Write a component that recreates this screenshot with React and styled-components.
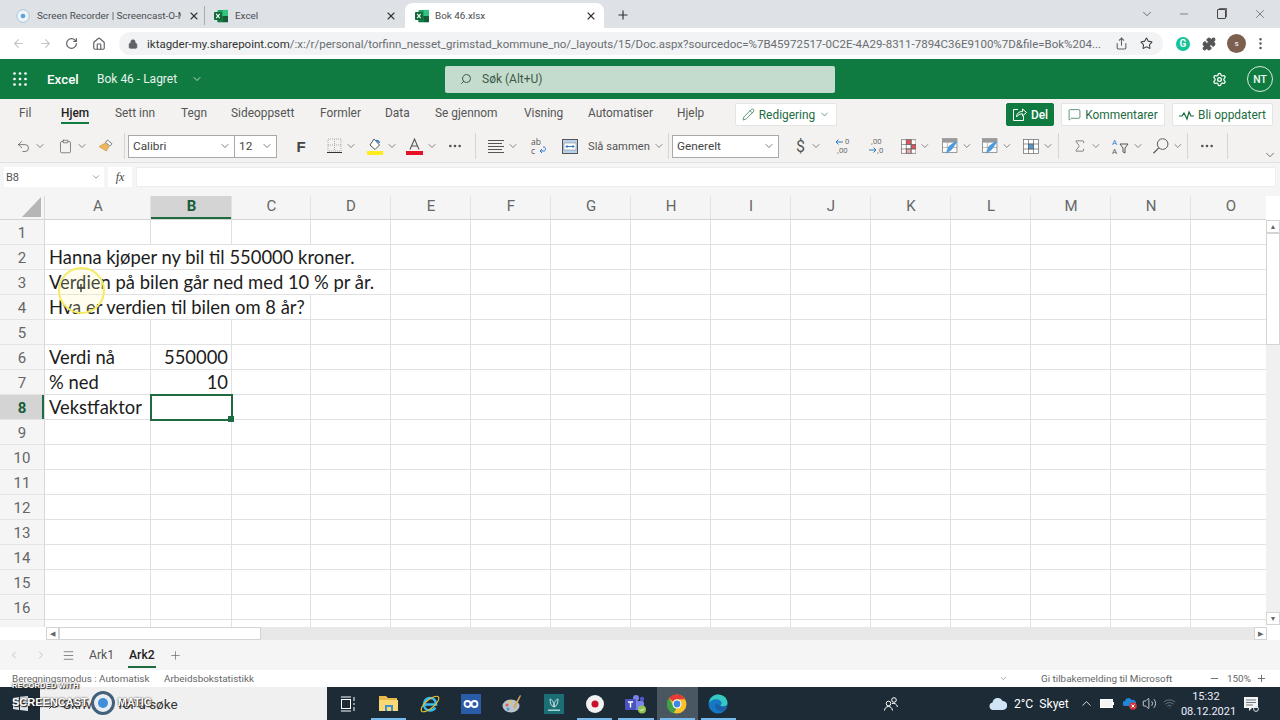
import React from 'react';
import styled, { createGlobalStyle } from 'styled-components';
import { ChevronDown, X, Plus, ArrowLeft, ArrowRight, RotateCw, Home, Lock, Share, Star, Puzzle, MoreVertical, Minus, Search, Settings, Pencil, MessageSquare, Undo2, Clipboard, MoreHorizontal, Sigma, ChevronLeft, ChevronRight, Menu, ChevronUp, Volume2, Wifi } from 'lucide-react';

const Global = createGlobalStyle`
  html, body { margin: 0; padding: 0; width: 1280px; height: 720px; overflow: hidden; background: #fff; }
  * { box-sizing: border-box; }
`;
const UI = `Roboto, "Open Sans", "Liberation Sans", sans-serif`;

const Page = styled.div`
  position: relative; width: 1280px; height: 720px; overflow: hidden;
  display: flex; flex-direction: column; font-family: ${UI}; color: #444;
`;

/* Browser tabs */
const TabStrip = styled.div`
  height: 28px; background: #dee1e6; display: flex; align-items: flex-end; padding-left: 8px; flex: none;
`;
const BrowserTab = styled.div`
  width: ${p => p.$w}px; height: 25px; display: flex; align-items: center; padding-left: ${p => p.$pl}px;
  background: ${p => (p.$active ? '#fff' : 'transparent')};
  border-radius: 8px 8px 0 0; font-size: 9.9px; color: #4a4d51; position: relative; flex: none;
`;
const TabLabel = styled.span`
  margin-left: ${p => p.$ml}px; width: ${p => p.$w}px; white-space: nowrap; overflow: hidden;
`;
const TabClose = styled.span`
  display: flex; margin-left: ${p => p.$ml}px; color: #333;
`;
const TabDivider = styled.span`
  width: 1px; height: 19px; background: #a8abaf; margin: 0 0 3px -1px; flex: none; align-self: flex-end;
`;
const NewTab = styled.span`
  display: flex; margin: 0 0 6px 12px; color: #333;
`;
const WinControls = styled.div`
  margin-left: auto; display: flex; align-self: flex-start; height: 28px; align-items: center; color: #555; padding-right: 13px; gap: 24px;
`;
const MaxBox = styled.span`
  width: 9px; height: 10px; border: 1px solid #444; border-radius: 1px; box-shadow: 1.5px -1.5px 0 -0.5px #666; margin: 0 3px;
`;

/* Address bar */
const AddressBar = styled.div`
  height: 31px; background: #fff; display: flex; align-items: center; flex: none; padding-left: 12px; color: #5f6368;
`;
const NavIcon = styled.span`
  display: flex; margin-left: ${p => p.$ml || 0}px; color: ${p => p.$c || '#5f6368'};
`;
const Omnibox = styled.div`
  margin-left: 13px; width: 1044px; height: 23px; border-radius: 12px; background: #f1f3f4;
  display: flex; align-items: center; padding-left: 9px; font-size: 11.5px; color: #5b5e62; flex: none;
`;
const Url = styled.span`
  width: 958px; margin-left: 9px; white-space: nowrap; overflow: hidden; color: #6a6d71;
  b { font-weight: 400; color: #333; }
`;
const ExtBadge = styled.span`
  width: 14px; height: 14px; border-radius: 50%; background: #15c39a; color: #fff; font-size: 10px; display: flex; align-items: center; justify-content: center; margin-left: 13px; font-weight: 600;
`;
const Avatar = styled.span`
  width: 19px; height: 19px; border-radius: 50%; background: #7d5f50; color: #fff; font-size: 8px; display: flex; align-items: center; justify-content: center; margin-left: 11px;
`;

/* Excel header */
const AppBar = styled.div`
  height: 40px; background: #0f7b41; display: flex; align-items: center; padding-left: 13px; color: #fff; flex: none;
`;
const AppName = styled.span`
  font-size: 13.4px; font-weight: 500; margin-left: 20px; width: 50px;
`;
const DocName = styled.span`
  font-size: 12px; color: #e8f2ec; width: 94px; white-space: nowrap;
`;
const SearchBox = styled.div`
  margin-left: 242px; width: 390px; height: 27px; background: #c4dccd; border-radius: 2px; display: flex; align-items: center; padding-left: 15px; font-size: 12px; color: #3f5a4a; flex: none;
`;
const SearchText = styled.span` margin-left: 10px; `;
const UserCircle = styled.span`
  width: 26px; height: 26px; border-radius: 50%; border: 1px solid #d8eadf; margin-left: 20px; font-size: 10.4px; font-weight: 500; display: flex; align-items: center; justify-content: center; color: #f4fbf6;
`;

/* Ribbon */
const RibbonTabs = styled.div`
  height: 31px; background: #f3f2f1; display: flex; align-items: center; padding: 0 0 3px 0; flex: none; font-size: 11.9px; color: #555;
`;
const TabGroup = styled.div`
  width: 735px; flex: none; display: flex; align-items: center; padding-left: 19px;
`;
const RibbonTab = styled.span`
  position: relative; width: ${p => p.$w}px; flex: none; white-space: nowrap;
  color: ${p => (p.$on ? '#222' : '#555')}; font-weight: ${p => (p.$on ? 500 : 400)};
  ${p => p.$on && `&::after { content: ''; position: absolute; left: 0; width: 28px; bottom: -4px; height: 2px; background: #107c41; }`}
`;
const RibbonButton = styled.span`
  height: 23px; display: flex; align-items: center; gap: 4px; font-size: 11.9px; flex: none; white-space: nowrap; margin-top: 3px;
  width: ${p => p.$w}px; margin-left: ${p => p.$ml || 0}px; justify-content: center; border-radius: 2px;
  background: ${p => (p.$solid ? '#0f7b41' : '#fff')}; color: ${p => (p.$solid ? '#fff' : '#1c6b42')};
  font-weight: ${p => (p.$solid ? 500 : 400)};
  border: 1px solid ${p => (p.$solid ? '#0f7b41' : '#e4e4e4')};
`;
const Toolbar = styled.div`
  height: 33px; background: #f3f2f1; display: flex; align-items: center; flex: none; position: relative;
  border-bottom: 1px solid #e3e2e0; color: #555;
`;
const Tool = styled.span`
  width: ${p => p.$w}px; margin-left: ${p => p.$ml}px; height: 24px; display: flex; align-items: center; gap: ${p => p.$gap || 3}px; flex: none; justify-content: ${p => p.$j || 'flex-start'};
  font-size: 11.2px; color: #555; white-space: nowrap;
`;
const MergeLabel = styled.span` margin-right: -7px; `;
const Sep = styled.span`
  width: 1px; height: 26px; background: #d6d5d3; margin-left: ${p => p.$ml}px; flex: none;
`;
const SelectBox = styled.span`
  width: ${p => p.$w}px; margin-left: ${p => p.$ml || 0}px; height: 23px; background: #fff; border: 1px solid #a9a9a9; display: flex; align-items: center; justify-content: space-between; padding: 0 3px 0 4px; font-size: 11.8px; color: #444; flex: none;
`;
const BoldF = styled.span`
  font-family: "Liberation Sans", sans-serif; font-size: 15px; font-weight: 700; color: #444;
`;
const Dollar = styled.span` font-size: 16px; `;
const CollapseChev = styled.span`
  position: absolute; right: 3px; bottom: 0; display: flex; color: #555;
`;

/* Formula bar */
const FormulaBar = styled.div`
  height: 33px; background: #f5f5f5; display: flex; align-items: flex-start; padding: 4px 0 0 4px; flex: none;
`;
const NameBox = styled.div`
  width: 100px; height: 20px; background: #fff; display: flex; align-items: center; justify-content: space-between; padding: 0 3px 0 2px; font-size: 11px; color: #555;
`;
const FxBox = styled.div`
  width: 24px; height: 20px; background: #fff; margin-left: 4px; font-family: "Liberation Serif", serif; font-style: italic; font-size: 12px; color: #444; display: flex; align-items: center; justify-content: center;
`;
const FormulaInput = styled.div`
  width: 1140px; height: 20px; background: #fff; margin-left: 4px; border: 1px solid #eee;
`;

/* Sheet */
const Body = styled.div`
  height: 431px; display: flex; background: #fff; flex: none; overflow: hidden;
`;
const Grid = styled.div`
  width: 1266px; flex: none; overflow: hidden;
`;
const COLS = '45px 106px 81px 79px repeat(12, 80px)';
const HeadRow = styled.div`
  display: grid; grid-template-columns: ${COLS}; height: 24px; width: 1271px; background: #f5f5f5; border-bottom: 1px solid #d4d4d4;
`;
const Corner = styled.div`
  display: flex; align-items: flex-end; justify-content: flex-end; padding: 0 3px 2px 0; border-right: 1px solid #d8d8d8;
`;
const ColHead = styled.div`
  display: flex; align-items: center; justify-content: center; font-size: 15px; padding: 0 0 3px 1px;
  border-right: 1px solid #e2e2e2; color: ${p => (p.$on ? '#185c37' : '#666')}; font-weight: ${p => (p.$on ? 700 : 400)};
  background: ${p => (p.$on ? '#d4d4d4' : 'transparent')};
  ${p => p.$on && `box-shadow: inset 0 -2px 0 #1e6b42;`}
`;
const Row = styled.div`
  display: grid; grid-template-columns: ${COLS}; height: 25px; width: 1271px;
`;
const RowHead = styled.div`
  display: flex; align-items: center; justify-content: center; font-size: 15px; padding-top: 1px;
  background: ${p => (p.$on ? '#d4d4d4' : '#f5f5f5')}; color: ${p => (p.$on ? '#185c37' : '#666')}; font-weight: ${p => (p.$on ? 700 : 400)};
  border-right: 1px solid #d8d8d8; border-bottom: 1px solid #e4e4e4;
  ${p => p.$on && `box-shadow: inset -2px 0 0 #1e6b42;`}
`;
const Cell = styled.div`
  grid-column: span ${p => p.$span || 1};
  border-right: 1px solid #e1e1e1; border-bottom: 1px solid #e1e1e1;
  display: flex; align-items: center; white-space: nowrap;
  justify-content: ${p => (p.$right ? 'flex-end' : 'flex-start')};
  padding: 0 3px 1px 4px; font-family: "Lato", "Carlito", sans-serif; font-size: 18.4px; color: #1c1c1c;
  position: relative;
  ${p => p.$sel && `
    outline: 2px solid #1e6b42; outline-offset: -1px; z-index: 2;
    &::after { content: ''; position: absolute; right: -3px; bottom: -3px; width: 6px; height: 6px; background: #1e6b42; border: 0; }
  `}
`;
const VScroll = styled.div`
  width: 14px; flex: none; background: #f0f0f0; margin-top: 24px; height: 405px; display: flex; flex-direction: column; position: relative;
`;
const ScrollBtn = styled.div`
  height: 13px; background: #fff; border: 1px solid #d4d4d4; display: flex; align-items: center; justify-content: center; font-size: 7px; color: #666; flex: none;
`;
const VThumb = styled.div`
  height: 112px; background: #fff; border: 1px solid #d4d4d4; flex: none;
`;
const VTrack = styled.div` flex: 1; `;

const HScrollRow = styled.div`
  height: 13px; display: flex; padding-left: 46px; background: #fff; flex: none;
`;
const HBtn = styled.div`
  width: 13px; background: #fff; border: 1px solid #d4d4d4; display: flex; align-items: center; justify-content: center; font-size: 7px; color: #666; flex: none; overflow: hidden;
`;
const HThumb = styled.div`
  width: 202px; background: #fff; border: 1px solid #d4d4d4; flex: none;
`;
const HTrack = styled.div`
  width: 993px; background: #e8e8e8; flex: none;
`;

/* Sheet tabs */
const SheetTabs = styled.div`
  height: 30px; background: #f5f5f5; display: flex; align-items: center; padding-left: 8px; color: #666; flex: none; font-size: 12.2px;
`;
const SheetNav = styled.span`
  display: flex; margin-left: ${p => p.$ml || 0}px; color: ${p => p.$c || '#666'};
`;
const SheetTab = styled.span`
  position: relative; margin-left: ${p => p.$ml}px; width: ${p => p.$w}px; flex: none; color: ${p => (p.$on ? '#222' : '#555')};
  font-weight: ${p => (p.$on ? 500 : 400)};
  ${p => p.$on && `&::after { content: ''; position: absolute; left: -1px; right: -1px; bottom: -6px; height: 2px; background: #1e6b42; }`}
`;

/* Status bar */
const StatusBar = styled.div`
  height: 17px; background: #fff; display: flex; align-items: center; padding-left: 12px; font-size: 9.9px; color: #666; flex: none; white-space: nowrap;
`;
const StatusItem = styled.span`
  margin-left: ${p => p.$ml || 0}px; width: ${p => p.$w}px; display: flex; flex: none;
`;

/* Taskbar */
const Taskbar = styled.div`
  height: 33px; background: #1c2b36; display: flex; align-items: stretch; flex: none; color: #fff;
`;
const StartBtn = styled.div`
  width: 40px; flex: none; display: flex; align-items: center; justify-content: center;
`;
const TaskSearch = styled.div`
  width: 287px; background: #f0f0f0; display: flex; align-items: center; padding-left: 8px; font-size: 13.5px; color: #333; flex: none; gap: 3px;
`;
const TaskSlot = styled.div`
  width: 41.2px; flex: none; display: flex; align-items: center; justify-content: center; position: relative;
  background: ${p => (p.$active ? '#4a5761' : 'transparent')};
  ${p => p.$open && `&::after { content: ''; position: absolute; left: 3px; right: 3px; bottom: 0; height: 2px; background: #76b9ed; }`}
`;
const Tray = styled.div`
  flex: 1; display: flex; align-items: center; color: #fff;
`;
const TrayItem = styled.span`
  margin-left: ${p => p.$ml}px; display: flex; align-items: center; flex: none; white-space: nowrap; font-size: ${p => p.$fs || 12}px;
  ${p => p.$w && `width: ${p.$w}px;`}
`;
const Clock = styled.div`
  margin-left: ${p => p.$ml}px; width: 50px; text-align: center; font-size: 11px; line-height: 15px; flex: none; color: #eef;
`;

/* Overlays */
const ClickRing = styled.div`
  position: absolute; left: 58px; top: 267px; width: 47px; height: 47px; border-radius: 50%;
  border: 2px solid #f5ea62; background: rgba(255, 250, 170, 0.2); z-index: 5;
`;
const Pointer = styled.span`
  position: absolute; left: 75px; top: 282px; z-index: 6; display: flex; color: #444;
`;
const Watermark = styled.div`
  position: absolute; left: 12px; top: 682px; z-index: 7; color: #fff; font-family: "Liberation Sans", sans-serif; font-weight: 700;
  text-shadow: 0 0 2px #222, 1px 1px 1px #222; line-height: 1;
`;
const WmTop = styled.div` font-size: 7.5px; letter-spacing: 0.2px; `;
const WmRow = styled.div`
  display: flex; align-items: center; font-size: 11px; margin-top: 1px;
`;
const WmDot = styled.span`
  width: 24px; height: 24px; border-radius: 50%; border: 3px solid #43607a; background: #e9eef2; display: flex; align-items: center; justify-content: center; margin: 0 3px 0 3px;
  &::after { content: ''; width: 10px; height: 10px; border-radius: 50%; background: #3f8fd8; }
`;

const Chev = ({ s = 12 }) => <ChevronDown size={s} strokeWidth={1.4} />;

const ExcelIcon = ({ s = 14 }) => (
  <svg width={s} height={s} viewBox="0 0 16 16"><rect x="4" y="1" width="12" height="14" rx="1" fill="#21a366" /><rect x="10" y="1" width="6" height="7" fill="#33c481" /><rect x="4" y="8" width="6" height="7" fill="#107c41" /><rect x="10" y="8" width="6" height="7" fill="#185c37" /><rect x="0" y="3.5" width="9" height="9" rx="1" fill="#0e6b38" /><path d="M2.5 5.5l4 5M6.500 5.500l-4 5" stroke="#fff" strokeWidth="1.200" /></svg>
);
const ScreencastFav = () => (
  <svg width="14" height="14" viewBox="0 0 14 14"><circle cx="7" cy="7" r="6.3" fill="#eef3f7" stroke="#a9c6dc" /><circle cx="7" cy="7" r="2.3" fill="#5aa5de" /></svg>
);
const AppsDots = () => (
  <svg width="14" height="14" viewBox="0 0 14 14" fill="#fff">{[1.5, 7, 12.5].flatMap(x => [1.5, 7, 12.5].map(y => <circle key={x + '-' + y} cx={x} cy={y} r="1.35" />))}</svg>
);
const Painter = () => (
  <svg width="16" height="16" viewBox="0 0 16 16"><path d="M9.5 2 14 5.8 11.8 8 7.6 4.4z" fill="#fff" stroke="#777" /><path d="M7.4 5 11 8.6 8.4 13 1 8.6z" fill="#eeb75b" stroke="#c48f35" strokeWidth=".6" /></svg>
);
const Borders = () => (
  <svg width="15" height="16" viewBox="0 0 15 16" stroke="#aaa" fill="none" strokeDasharray="1 1"><rect x="1" y="1" width="13" height="12" /><path d="M7.5 1v12M1 7h13" /><path d="M0 14.5h15" stroke="#333" strokeDasharray="none" /></svg>
);
const Fill = () => (
  <svg width="16" height="17" viewBox="0 0 16 17"><path d="M7 1l5.5 6L8 11.5 3 7z" fill="#fff" stroke="#555" /><path d="M9 2.5c2 0 3 .5 3.5 2.5" stroke="#2d7bc9" fill="none" strokeWidth="1.4" /><rect x="0" y="13" width="16" height="4" fill="#ffec1e" /></svg>
);
const FontColor = () => (
  <svg width="17" height="17" viewBox="0 0 17 17"><path d="M4 11.5 8.5 1l4.500 10.500M5.700 8h5.600" stroke="#555" fill="none" strokeWidth="1.100" /><rect x="0" y="13" width="17" height="4" fill="#e81123" /></svg>
);
const AlignLines = () => (
  <svg width="16" height="16" viewBox="0 0 16 16" stroke="#555"><path d="M0 2.500h16M0 5.500h14M0 8.500h16M0 11.500h14M0 14.500h16" /></svg>
);
const Wrap = () => (
  <svg width="16" height="18" viewBox="0 0 16 18"><text x="0" y="8" fontSize="8.500" fill="#555" fontFamily="Open Sans">ab</text><text x="0" y="17" fontSize="8.500" fill="#555" fontFamily="Open Sans">c</text><path d="M9 14h4c2 0 2-4 0-4h-1M11 12l-2 2 2 2" stroke="#2d7bc9" fill="none" /></svg>
);
const Merge = () => (
  <svg width="16" height="15" viewBox="0 0 16 15"><rect x=".5" y=".5" width="15" height="14" fill="#b9d3ec" stroke="#555" /><rect x="2" y="4" width="12" height="7" fill="#fff" stroke="#777" strokeWidth=".5" /><path d="M4 7.500h8M5.500 6 4 7.500 5.500 9M10.500 6 12 7.500 10.500 9" stroke="#2d7bc9" fill="none" /></svg>
);
const DecLeft = () => (
  <svg width="16" height="18" viewBox="0 0 16 18"><path d="M8 5H1M3.500 2.500 1 5l2.500 2.500" stroke="#2d7bc9" fill="none" /><text x="10" y="7" fontSize="7.500" fill="#555" fontFamily="Open Sans">0</text><text x="2" y="16" fontSize="7.500" fill="#555" fontFamily="Open Sans">,00</text></svg>
);
const DecRight = () => (
  <svg width="16" height="18" viewBox="0 0 16 18"><text x="3" y="7" fontSize="7.500" fill="#555" fontFamily="Open Sans">,00</text><path d="M1 13h7M5.500 10.500 8 13l-2.500 2.500" stroke="#2d7bc9" fill="none" /><text x="9" y="16" fontSize="7.500" fill="#555" fontFamily="Open Sans">,0</text></svg>
);
const TableRed = () => (
  <svg width="16" height="15" viewBox="0 0 16 15" stroke="#666" strokeWidth=".7"><rect x=".5" y=".5" width="15" height="14" fill="#fff" /><rect x="5.500" y=".5" width="5" height="5" fill="#e8505b" /><rect x="10.500" y="5.500" width="5" height="4.500" fill="#e8505b" /><rect x="5.500" y="10" width="5" height="4.500" fill="#f7a6ab" /><path d="M.5 5.500h15M.5 10h15M5.500.5v14M10.500.5v14" fill="none" /></svg>
);
const TableBrush = () => (
  <svg width="17" height="17" viewBox="0 0 17 17"><rect x=".5" y=".5" width="15" height="14" fill="#fff" stroke="#666" strokeWidth=".7" /><rect x=".5" y=".5" width="15" height="4" fill="#9a9a9a" /><path d="M5.500 4.500v10M.5 9.500h15" stroke="#888" strokeWidth=".6" /><path d="M4 16l3-8 7-5 1.500 1-5.500 8z" fill="#4c9ad9" /></svg>
);
const CellsIcon = () => (
  <svg width="16" height="16" viewBox="0 0 16 16" stroke="#666" strokeWidth=".7" fill="none"><rect x=".5" y="1.500" width="15" height="14" fill="#fff" /><rect x="5.500" y="6" width="5" height="5" fill="#4c9ad9" /><path d="M.5 6h15M.5 11h15M5.500 1.500v14M10.500 1.500v14" /></svg>
);
const SortFilter = () => (
  <svg width="17" height="18" viewBox="0 0 17 18"><text x="0" y="8" fontSize="8" fill="#2d7bc9" fontFamily="Open Sans">A</text><text x="0" y="17" fontSize="8" fill="#555" fontFamily="Open Sans">A</text><path d="M8 7h8l-3 4v5l-2-1v-4z" fill="none" stroke="#555" /></svg>
);
const SearchGlass = () => (
  <svg width="18" height="18" viewBox="0 0 18 18" fill="none" stroke="#555"><circle cx="11" cy="7" r="5.500" /><path d="M7 11l-5.500 5.500" strokeWidth="1.200" /></svg>
);
const ShareBox = ({ c = '#fff' }) => (
  <svg width="15" height="15" viewBox="0 0 15 15" fill="none" stroke={c}><path d="M6 2.500H1.500v11h10V9" /><path d="M4.500 10c0-3.500 2.500-5.500 6-5.500V2l4 3.500-4 3.500V6.800c-2.500 0-4.500 1-6 3.200z" /></svg>
);
const Pulse = () => (
  <svg width="15" height="12" viewBox="0 0 15 12" fill="none" stroke="#1c6b42" strokeWidth="1.200"><path d="M0 7h3l2-3 3 6 2-7 2 4h3" /></svg>
);
const WinLogo = () => (
  <svg width="15" height="15" viewBox="0 0 15 15" fill="#dfe5ea"><path d="M0 2l6-1v6H0zM7 .8 15 0v7H7zM0 8h6v6l-6-1zM7 8h8v7l-8-1z" /></svg>
);
const TaskView = () => (
  <svg width="16" height="16" viewBox="0 0 16 16" fill="none" stroke="#fff"><rect x="1.500" y="3.500" width="9" height="9" /><path d="M1 1h10M1 15h10M14 1v4M14 7v2M14 11v4" /></svg>
);
const Explorer = () => (
  <svg width="20" height="18" viewBox="0 0 20 18"><path d="M0 1h7l2 2h9v13H0z" fill="#e9b949" /><rect x="0" y="5" width="19" height="11" fill="#f8d775" /><rect x="6" y="10" width="8" height="6" fill="#3f8fd0" /><rect x="8" y="12" width="4" height="4" fill="#f8d775" /></svg>
);
const IE = () => (
  <svg width="22" height="22" viewBox="0 0 22 22" fill="none"><path d="M5.500 11.500h11.500c0-4-2.500-6.500-6-6.500s-6 2.800-6 6.500c0 3.600 2.500 6 6 6 2.400 0 4.300-1 5.300-3" stroke="#39bdf0" strokeWidth="2.600" /><ellipse cx="11" cy="11" rx="11" ry="4.200" transform="rotate(-40 11 11)" stroke="#e8c533" strokeWidth="1.100" /></svg>
);
const Infinity2 = () => (
  <svg width="20" height="20" viewBox="0 0 20 20"><rect width="20" height="20" fill="#2a5caa" /><circle cx="6.500" cy="10" r="3" fill="none" stroke="#fff" strokeWidth="1.800" /><circle cx="13.500" cy="10" r="3" fill="none" stroke="#fff" strokeWidth="1.800" /></svg>
);
const Palette = () => (
  <svg width="20" height="20" viewBox="0 0 20 20"><ellipse cx="9" cy="12" rx="8.500" ry="6.500" fill="#b9c4cc" /><circle cx="5" cy="11" r="1.500" fill="#e25b4c" /><circle cx="8" cy="8" r="1.500" fill="#f2c33c" /><circle cx="6" cy="15" r="1.500" fill="#3c9ad9" /><path d="M11 13 18 1l1 .7-6 13z" fill="#d9a55a" /></svg>
);
const Unibok = () => (
  <svg width="20" height="20" viewBox="0 0 20 20"><rect width="20" height="20" fill="#1a6f75" /><path d="M10 13C7 12 6 9 6 5c2 .5 4 3 4 8zM10 13c3-1 4-4 4-8-2 .5-4 3-4 8z" fill="none" stroke="#d6eced" strokeWidth=".9" /><rect x="4" y="15.500" width="12" height="1.500" fill="#a7d3d6" /></svg>
);
const RecordBtn = () => (
  <svg width="18" height="18" viewBox="0 0 18 18"><circle cx="9" cy="9" r="9" fill="#f1f1f1" /><circle cx="9" cy="9" r="3.500" fill="#c8102e" /></svg>
);
const Teams = () => (
  <svg width="22" height="20" viewBox="0 0 22 20"><circle cx="11" cy="4" r="3" fill="#7b83eb" /><circle cx="17" cy="5" r="2.200" fill="#5059c9" /><rect x="8" y="7" width="11" height="9" rx="2" fill="#7b83eb" /><rect x="0" y="5" width="11" height="11" rx="1" fill="#4b53bc" /><path d="M3 8h5M5.500 8v5.500" stroke="#fff" strokeWidth="1.400" /><circle cx="17" cy="15.500" r="4" fill="#92c353" /><path d="M15 15.500l1.500 1.500 2.500-2.500" stroke="#fff" fill="none" /></svg>
);
const ChromeLogo = () => (
  <svg width="20" height="20" viewBox="0 0 20 20"><circle cx="10" cy="10" r="9.500" fill="#fbc02d" /><path d="M10 .5A9.500 9.500 0 0 1 18.200 5.200H10A4.800 4.800 0 0 0 5.800 7.600L2 3.900A9.500 9.500 0 0 1 10 .5z" fill="#e53935" /><path d="M2 3.900l4 6.900a4.800 4.800 0 0 0 3.300 3.900l-2.800 4.600A9.500 9.500 0 0 1 2 3.900z" fill="#43a047" /><circle cx="10" cy="10" r="4.500" fill="#fff" /><circle cx="10" cy="10" r="3.400" fill="#3f87e5" /></svg>
);
const Edge = () => (
  <svg width="20" height="20" viewBox="0 0 20 20"><circle cx="10" cy="10" r="9.500" fill="#1478c4" /><path d="M.6 9C2 3 6.500.5 10 .5c5.500 0 9.500 4 9.500 8.500 0 2.500-2 3.500-4 3.500-1.500 0-3-.5-3.500-1 1.500-.8 2-2 1.500-3.200C12.500 6 10 5 7.500 5.300 4 5.700 1.800 7.500.6 9z" fill="#35c9c0" /><path d="M12 11.500c1 1 2.500 1.300 3.500 1 2 0 4-1 4-3.500 0 2-.5 5.500-4 8-1 .3-4 .5-6-1-2.500-1.500-3-5-1-7 .5 1 1.500 2 3.500 2.500z" fill="#1a5fa8" /></svg>
);
const Cloud = () => (
  <svg width="18" height="14" viewBox="0 0 18 14"><path d="M4 13a3.800 3.800 0 0 1-.5-7.500A5.300 5.300 0 0 1 13.500 4 4.500 4.500 0 0 1 14 13z" fill="#cfe4f5" /></svg>
);
const Battery = () => (
  <svg width="14" height="9" viewBox="0 0 14 9"><rect x=".5" y=".5" width="12" height="8" fill="#f4f4f4" stroke="#fff" /><rect x="13" y="3" width="1" height="3" fill="#fff" /></svg>
);
const OneDriveErr = () => (
  <svg width="14" height="13" viewBox="0 0 14 13"><path d="M2 9a2.500 2.500 0 0 1 0-5 3.500 3.500 0 0 1 6.600-1A3 3 0 0 1 11 9z" fill="#1f88d9" /><circle cx="10" cy="9" r="3.800" fill="#d13438" /><path d="M8.500 7.500l3 3M11.500 7.500l-3 3" stroke="#fff" /></svg>
);
const Notif = () => (
  <svg width="16" height="16" viewBox="0 0 16 16"><path d="M1 1h14v11H9l-3 3v-3H1z" fill="#f4f4f4" /><path d="M3 4h10M3 6.500h10M3 9h7" stroke="#6c7780" /><circle cx="13" cy="13" r="2.400" fill="none" stroke="#dfe5ea" /></svg>
);
const People = () => (
  <svg width="14" height="14" viewBox="0 0 14 14" fill="none" stroke="#fff" strokeWidth="1"><circle cx="4.500" cy="6.500" r="2.300" /><circle cx="10" cy="3" r="2.300" /><path d="M.5 13.500c.3-2.500 1.800-4 4-4s3.700 1.500 4 4M8 6.500c2.500-.8 5 .8 5.500 3.500" /></svg>
);
const CornerTri = () => (
  <svg width="19" height="20" viewBox="0 0 19 20"><path d="M19 0v20H0z" fill="#b6b6b6" /></svg>
);

const columns = ['A', 'B', 'C', 'D', 'E', 'F', 'G', 'H', 'I', 'J', 'K', 'L', 'M', 'N', 'O'];

const Blank = ({ n }) => Array.from({ length: n }, (_, i) => <Cell key={i} />);

const rows = [
  { n: 1, parts: [] },
  { n: 2, parts: [{ t: 'Hanna kjøper ny bil til 550000 kroner.', span: 4 }] },
  { n: 3, parts: [{ t: 'Verdien på bilen går ned med 10 % pr år.', span: 4 }] },
  { n: 4, parts: [{ t: 'Hva er verdien til bilen om 8 år?', span: 3 }] },
  { n: 5, parts: [] },
  { n: 6, parts: [{ t: 'Verdi nå' }, { t: '550000', right: true }] },
  { n: 7, parts: [{ t: '% ned' }, { t: '10', right: true }] },
  { n: 8, on: true, parts: [{ t: 'Vekstfaktor' }, { t: '', sel: true }] },
  ...Array.from({ length: 9 }, (_, i) => ({ n: 9 + i, parts: [] })),
];

const ribbonTabs = [
  ['Fil', 42], ['Hjem', 54], ['Sett inn', 66], ['Tegn', 50], ['Sideoppsett', 89], ['Formler', 65],
  ['Data', 50], ['Se gjennom', 89], ['Visning', 64], ['Automatiser', 89], ['Hjelp', 30],
];

export default function App() {
  return (
    <Page>
      <Global />
      <TabStrip>
        <BrowserTab $w={197} $pl={8}>
          <ScreencastFav />
          <TabLabel $ml={7} $w={144}>Screen Recorder | Screencast-O-Matic</TabLabel>
          <TabClose $ml={7}><X size={12} strokeWidth={2.2} /></TabClose>
        </BrowserTab>
        <TabDivider />
        <BrowserTab $w={200} $pl={9}>
          <ExcelIcon />
          <TabLabel $ml={7} $w={150}>Excel</TabLabel>
          <TabClose $ml={0}><X size={12} strokeWidth={2.2} /></TabClose>
        </BrowserTab>
        <BrowserTab $active $w={199} $pl={10}>
          <ExcelIcon />
          <TabLabel $ml={6} $w={150}>Bok 46.xlsx</TabLabel>
          <TabClose $ml={0}><X size={12} strokeWidth={2.2} /></TabClose>
        </BrowserTab>
        <NewTab><Plus size={14} strokeWidth={2} /></NewTab>
        <WinControls>
          <Chev s={14} />
          <Minus size={12} strokeWidth={1.4} />
          <MaxBox />
          <X size={14} strokeWidth={1.2} />
        </WinControls>
      </TabStrip>

      <AddressBar>
        <NavIcon $c="#c2c4c7"><ArrowLeft size={13} /></NavIcon>
        <NavIcon $ml={14} $c="#c2c4c7"><ArrowRight size={13} /></NavIcon>
        <NavIcon $ml={13}><RotateCw size={13} strokeWidth={2.2} /></NavIcon>
        <NavIcon $ml={14}><Home size={14} /></NavIcon>
        <Omnibox>
          <Lock size={10} fill="#5f6368" />
          <Url><b>iktagder-my.sharepoint.com</b>/:x:/r/personal/torfinn_nesset_grimstad_kommune_no/_layouts/15/Doc.aspx?sourcedoc=%7B45972517-0C2E-4A29-8311-7894C36E9100%7D&amp;file=Bok%204...</Url>
          <NavIcon $ml={10}><Share size={13} /></NavIcon>
          <NavIcon $ml={12} $c="#444"><Star size={13} /></NavIcon>
        </Omnibox>
        <ExtBadge>G</ExtBadge>
        <NavIcon $ml={12} $c="#555"><Puzzle size={14} fill="#555" /></NavIcon>
        <Avatar>s</Avatar>
        <NavIcon $ml={7} $c="#555"><MoreVertical size={15} /></NavIcon>
      </AddressBar>

      <AppBar>
        <AppsDots />
        <AppName>Excel</AppName>
        <DocName>Bok 46 - Lagret</DocName>
        <Chev s={12} />
        <SearchBox>
          <Search size={12} style={{ transform: 'scaleX(-1)' }} />
          <SearchText>Søk (Alt+U)</SearchText>
        </SearchBox>
        <NavIcon $ml={377} $c="#fff"><Settings size={15} /></NavIcon>
        <UserCircle>NT</UserCircle>
      </AppBar>

      <RibbonTabs>
        <TabGroup>
          {ribbonTabs.map(([t, w]) => <RibbonTab key={t} $w={w} $on={t === 'Hjem'}>{t}</RibbonTab>)}
        </TabGroup>
        <RibbonButton $w={102}><Pencil size={13} strokeWidth={1.3} />Redigering<Chev s={11} /></RibbonButton>
        <RibbonButton $solid $w={48} $ml={169}><ShareBox />Del</RibbonButton>
        <RibbonButton $w={104} $ml={7}><MessageSquare size={13} strokeWidth={1.3} />Kommentarer</RibbonButton>
        <RibbonButton $w={101} $ml={7}><Pulse />Bli oppdatert</RibbonButton>
      </RibbonTabs>

      <Toolbar>
        <Tool $w={34} $ml={16}><Undo2 size={15} strokeWidth={1.2} /><Chev /></Tool>
        <Tool $w={34} $ml={8}><Clipboard size={15} strokeWidth={1.1} /><Chev /></Tool>
        <Tool $w={20} $ml={6}><Painter /></Tool>
        <Sep $ml={6} />
        <SelectBox $w={107} $ml={3}>Calibri<Chev /></SelectBox>
        <SelectBox $w={43} $ml={-1}>12<Chev /></SelectBox>
        <Tool $w={20} $ml={14} $j="center"><BoldF>F</BoldF></Tool>
        <Tool $w={34} $ml={16}><Borders /><Chev /></Tool>
        <Tool $w={36} $ml={6}><Fill /><Chev /></Tool>
        <Tool $w={36} $ml={3}><FontColor /><Chev /></Tool>
        <Tool $w={20} $ml={3} $j="center"><MoreHorizontal size={16} /></Tool>
        <Sep $ml={10} />
        <Tool $w={34} $ml={12}><AlignLines /><Chev /></Tool>
        <Tool $w={18} $ml={9}><Wrap /></Tool>
        <Tool $w={106} $ml={13} $gap={10}><Merge /><MergeLabel>Slå sammen</MergeLabel><Chev /></Tool>
        <Sep $ml={0} />
        <SelectBox $w={107} $ml={3}>Generelt<Chev /></SelectBox>
        <Tool $w={34} $ml={17} $gap={5}><Dollar>$</Dollar><Chev /></Tool>
        <Tool $w={16} $ml={5}><DecLeft /></Tool>
        <Tool $w={16} $ml={17}><DecRight /></Tool>
        <Tool $w={30} $ml={17}><TableRed /><Chev /></Tool>
        <Tool $w={31} $ml={11}><TableBrush /><Chev /></Tool>
        <Tool $w={31} $ml={9}><TableBrush /><Chev /></Tool>
        <Tool $w={31} $ml={10}><CellsIcon /><Chev /></Tool>
        <Sep $ml={4} />
        <Tool $w={30} $ml={13}><Sigma size={16} strokeWidth={1.1} /><Chev /></Tool>
        <Tool $w={32} $ml={10}><SortFilter /><Chev /></Tool>
        <Tool $w={32} $ml={8}><SearchGlass /><Chev /></Tool>
        <Sep $ml={3} />
        <Tool $w={20} $ml={9} $j="center"><MoreHorizontal size={16} /></Tool>
        <Sep $ml={10} />
        <CollapseChev><Chev s={14} /></CollapseChev>
      </Toolbar>

      <FormulaBar>
        <NameBox>B8<Chev s={10} /></NameBox>
        <FxBox>fx</FxBox>
        <FormulaInput />
      </FormulaBar>

      <Body>
        <Grid>
          <HeadRow>
            <Corner><CornerTri /></Corner>
            {columns.map(c => <ColHead key={c} $on={c === 'B'}>{c}</ColHead>)}
          </HeadRow>
          {rows.map(r => {
            const used = r.parts.reduce((a, p) => a + (p.span || 1), 0);
            return (
              <Row key={r.n}>
                <RowHead $on={r.on}>{r.n}</RowHead>
                {r.parts.map((p, i) => <Cell key={i} $span={p.span} $right={p.right} $sel={p.sel}>{p.t}</Cell>)}
                <Blank n={15 - used} />
              </Row>
            );
          })}
        </Grid>
        <VScroll>
          <ScrollBtn>▲</ScrollBtn>
          <VThumb />
          <VTrack />
          <ScrollBtn>▼</ScrollBtn>
        </VScroll>
      </Body>
      <HScrollRow>
        <HBtn>◀</HBtn>
        <HThumb />
        <HTrack />
        <HBtn>▶</HBtn>
      </HScrollRow>

      <SheetTabs>
        <SheetNav $c="#c4c4c4"><ChevronLeft size={12} /></SheetNav>
        <SheetNav $ml={15} $c="#c4c4c4"><ChevronRight size={12} /></SheetNav>
        <SheetNav $ml={15}><Menu size={13} strokeWidth={1.4} /></SheetNav>
        <SheetTab $ml={14} $w={26}>Ark1</SheetTab>
        <SheetTab $ml={14} $w={26} $on>Ark2</SheetTab>
        <SheetNav $ml={14}><Plus size={13} strokeWidth={1.3} /></SheetNav>
      </SheetTabs>

      <StatusBar>
        <StatusItem $w={152}>Beregningsmodus : Automatisk</StatusItem>
        <StatusItem $w={90}>Arbeidsbokstatistikk</StatusItem>
        <StatusItem $ml={745} $w={42}><Chev s={9} /></StatusItem>
        <StatusItem $w={168}>Gi tilbakemelding til Microsoft</StatusItem>
        <StatusItem $w={18}><Minus size={11} /></StatusItem>
        <StatusItem $w={29}>150%</StatusItem>
        <StatusItem $w={12}><Plus size={11} /></StatusItem>
      </StatusBar>

      <Taskbar>
        <StartBtn><WinLogo /></StartBtn>
        <TaskSearch><Search size={12} style={{ transform: 'scaleX(-1)' }} />Skriv her for å søke</TaskSearch>
        <TaskSlot><TaskView /></TaskSlot>
        <TaskSlot $open><Explorer /></TaskSlot>
        <TaskSlot><IE /></TaskSlot>
        <TaskSlot><Infinity2 /></TaskSlot>
        <TaskSlot><Palette /></TaskSlot>
        <TaskSlot><Unibok /></TaskSlot>
        <TaskSlot $open><RecordBtn /></TaskSlot>
        <TaskSlot $open><Teams /></TaskSlot>
        <TaskSlot $open $active><ChromeLogo /></TaskSlot>
        <TaskSlot $open><Edge /></TaskSlot>
        <Tray>
          <TrayItem $ml={145}><People /></TrayItem>
          <TrayItem $ml={91}><Cloud /></TrayItem>
          <TrayItem $ml={7} $fs={12.2} $w={56}>2°C&nbsp; Skyet</TrayItem>
          <TrayItem $ml={9}><ChevronUp size={15} strokeWidth={1.3} /></TrayItem>
          <TrayItem $ml={6}><Battery /></TrayItem>
          <TrayItem $ml={9}><OneDriveErr /></TrayItem>
          <TrayItem $ml={5}><Volume2 size={15} strokeWidth={1.2} /></TrayItem>
          <TrayItem $ml={6}><Wifi size={13} strokeWidth={1.3} color="#8a949b" /></TrayItem>
          <Clock $ml={5}>15:32<br />08.12.2021</Clock>
          <TrayItem $ml={12}><Notif /></TrayItem>
        </Tray>
      </Taskbar>

      <ClickRing />
      <Pointer><Plus size={12} strokeWidth={3} /></Pointer>
      <Watermark>
        <WmTop>RECORDED WITH</WmTop>
        <WmRow>SCREENCAST<WmDot />MATIC</WmRow>
      </Watermark>
    </Page>
  );
}
